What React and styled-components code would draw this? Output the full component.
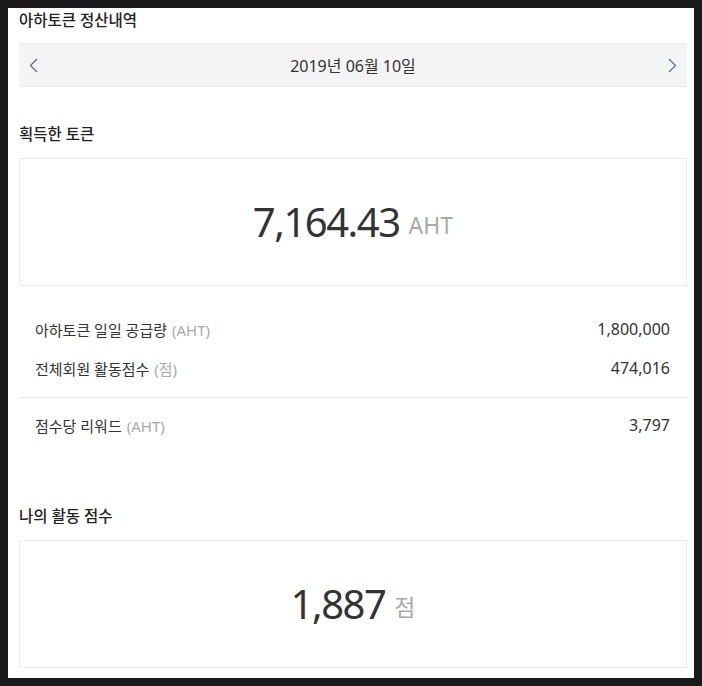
import styled, { createGlobalStyle } from 'styled-components';

const GlobalStyle = createGlobalStyle`
	html {
		background: #1a1a1a;
	}
	body {
		margin: 8px;
		height: 670px;
		overflow: hidden;
		background: #fff;
		font-family: 'Noto Sans', 'Noto Sans CJK KR', sans-serif;
		color: #333;
	}
`;

const Page = styled.div`
	padding: 2px 7px 0 11px;
`;

const Title = styled.h2`
	margin: 0;
	font-size: 15.5px;
	line-height: 20px;
	font-weight: 500;
	color: #222;
`;

const DateBar = styled.div`
	margin-top: 13px;
	height: 42px;
	display: flex;
	align-items: center;
	justify-content: space-between;
	padding: 0 10px;
	background: #f4f4f4;
	border-top: 1px solid #ebebeb;
	border-bottom: 1px solid #ebebeb;
`;

const DateText = styled.span`
	font-size: 16px;
	color: #333;
`;

const Arrow = styled.button`
	border: 0;
	background: none;
	padding: 0;
	width: 9px;
	height: 15px;
	display: flex;
	align-items: center;
	justify-content: center;
`;

const Heading = styled.h3`
	margin: ${(props) => props.gap}px 0 0;
	font-size: 15.5px;
	line-height: 20px;
	font-weight: 500;
	color: #222;
`;

const Card = styled.div`
	margin-top: 14px;
	height: 126px;
	border: 1px solid #ebebeb;
	display: flex;
	align-items: center;
	justify-content: center;
	gap: 9px;
`;

const BigValue = styled.span`
	font-size: 40px;
	letter-spacing: -1.5px;
	color: #333;
	line-height: 1;
`;

const BigUnit = styled.span`
	font-size: 23px;
	color: #aaa;
	line-height: 1;
	margin-top: 6px;
`;

const Rows = styled.div`
	padding-top: 33px;
`;

const Row = styled.div`
	display: flex;
	justify-content: space-between;
	align-items: center;
	padding: 0 17px 0 16px;
	height: 20px;
	margin-top: ${(props) => props.gap || 0}px;
`;

const Label = styled.span`
	font-size: 15px;
	color: #333;
`;

const Unit = styled.span`
	font-size: 15px;
	color: #aaa;
	margin-left: 5px;
`;

const Amount = styled.span`
	font-size: 16px;
	color: #333;
`;

const Divider = styled.hr`
	margin: 19px 0 17px;
	border: 0;
	border-top: 1px solid #e8e8e8;
`;

const Chevron = ({ dir }) => (
	<svg width="9" height="15" viewBox="0 0 9 15">
		<polyline
			points={dir === 'left' ? '8,1 1.5,7.5 8,14' : '1,1 7.5,7.5 1,14'}
			fill="none"
			stroke="#5f6b78"
			strokeWidth="1.2"
		/>
	</svg>
);

const App = () => {
	return (
		<Page>
			<GlobalStyle />
			<Title>아하토큰 정산내역</Title>
			<DateBar>
				<Arrow>
					<Chevron dir="left" />
				</Arrow>
				<DateText>2019년 06월 10일</DateText>
				<Arrow>
					<Chevron dir="right" />
				</Arrow>
			</DateBar>

			<Heading gap={37}>획득한 토큰</Heading>
			<Card>
				<BigValue>7,164.43</BigValue>
				<BigUnit>AHT</BigUnit>
			</Card>

			<Rows>
				<Row>
					<Label>
						아하토큰 일일 공급량<Unit>(AHT)</Unit>
					</Label>
					<Amount>1,800,000</Amount>
				</Row>
				<Row gap={19}>
					<Label>
						전체회원 활동점수<Unit>(점)</Unit>
					</Label>
					<Amount>474,016</Amount>
				</Row>
				<Divider />
				<Row>
					<Label>
						점수당 리워드<Unit>(AHT)</Unit>
					</Label>
					<Amount>3,797</Amount>
				</Row>
			</Rows>

			<Heading gap={71}>나의 활동 점수</Heading>
			<Card>
				<BigValue>1,887</BigValue>
				<BigUnit>점</BigUnit>
			</Card>
		</Page>
	);
};

export default App;
